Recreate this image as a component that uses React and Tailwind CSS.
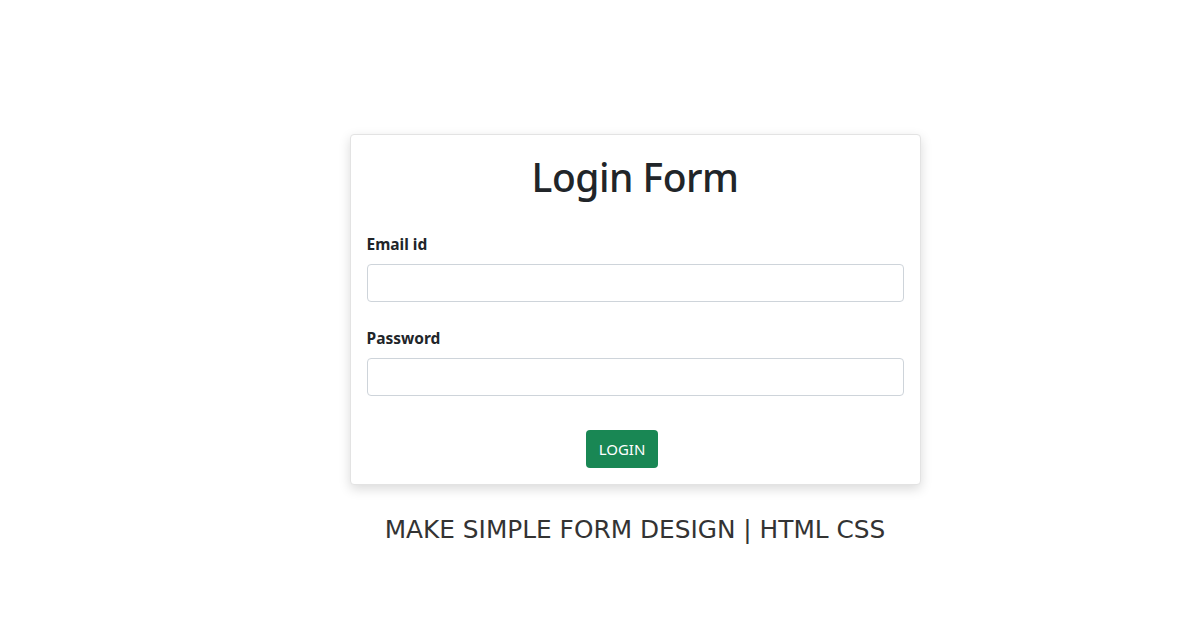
import React from 'react';

const App = () => {
  return (
    <div className="min-h-screen bg-white text-[#212529] pt-[134px] pl-[77px] flex flex-col items-center">
      <div className="w-[571px] bg-white border border-[#e3e3e3] rounded shadow-[0_4px_12px_rgba(0,0,0,0.15)] px-4 pt-[16px] pb-4 font-['Noto_Sans',sans-serif]">
        {/* Title */}
        <h1 className="text-center text-[39px] leading-[52px] font-medium tracking-[-0.5px]">Login Form</h1>

        {/* Email */}
        <div className="mt-[31px]">
          <label className="block text-[15.5px] font-bold leading-[20px]">Email id</label>
          <input type="email" className="mt-[10px] block w-full h-[38px] border border-[#ced4da] rounded bg-white px-3 outline-none" />
        </div>

        {/* Password */}
        <div className="mt-[26px]">
          <label className="block text-[15.5px] font-bold leading-[20px]">Password</label>
          <input type="password" className="mt-[10px] block w-full h-[38px] border border-[#ced4da] rounded bg-white px-3 outline-none" />
        </div>

        {/* Button */}
        <div className="mt-[34px] flex justify-center pr-[26px]">
          <button className="h-[38px] px-[13px] bg-[#198754] hover:bg-[#157347] text-white text-[15px] rounded">
            LOGIN
          </button>
        </div>
      </div>

      <p className="mt-[30px] text-[24.8px] leading-[30px] text-[#333] font-['DejaVu_Sans',sans-serif]">
        MAKE SIMPLE FORM DESIGN | HTML CSS
      </p>
    </div>
  );
};

export default App;
